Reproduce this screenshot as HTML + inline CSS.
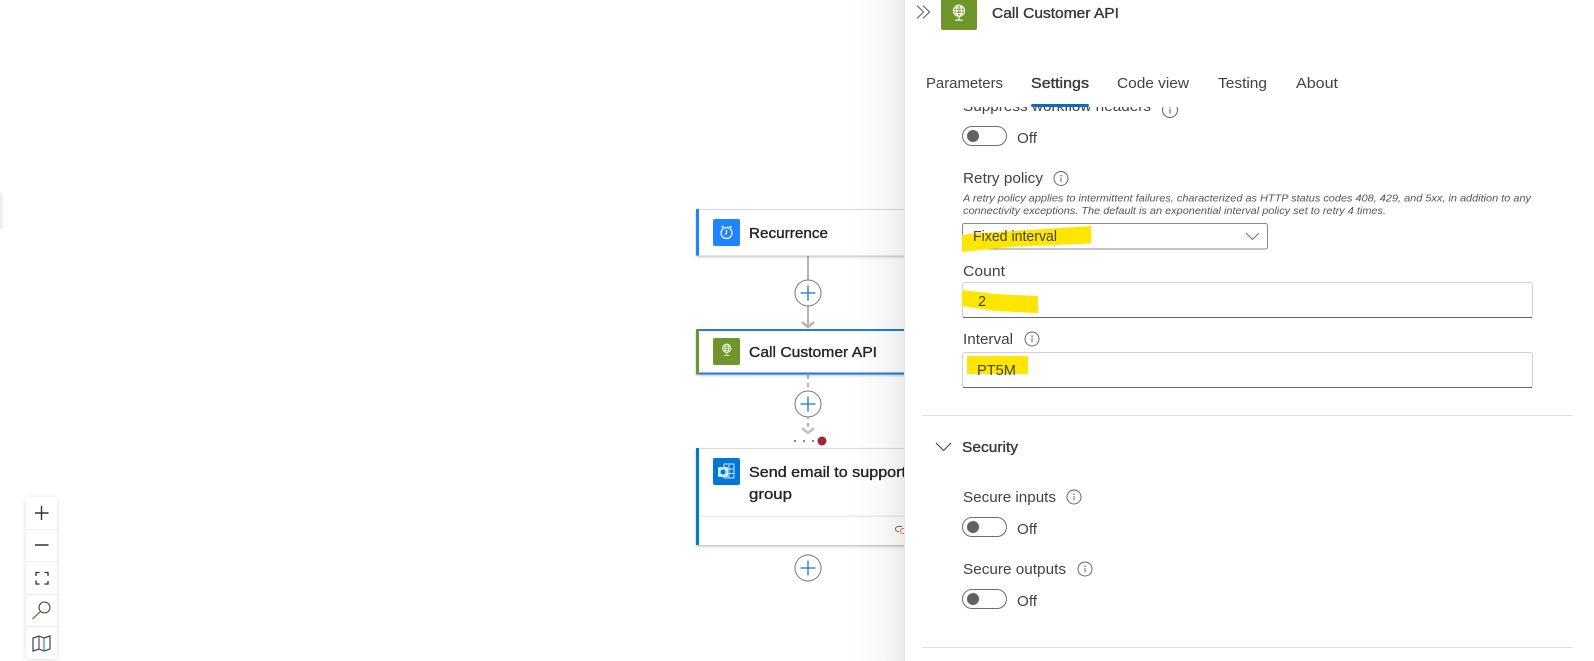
<!DOCTYPE html>
<html><head><meta charset="utf-8"><title>Call Customer API</title>
<style>
html,body{margin:0;padding:0;background:#fff;width:1594px;height:661px;overflow:hidden}
svg{display:block}
text{font-family:"Liberation Sans",sans-serif;fill:#424242}
.c{font-size:15px;fill:#242424;stroke:#242424;stroke-width:.35px}
.l{font-size:15px}
.sb{stroke:#383838;stroke-width:.35px;fill:#383838}
.h{font-size:10.5px;font-style:italic;fill:#555}
</style></head><body>
<svg width="1594" height="661" viewBox="0 0 1594 661" xmlns="http://www.w3.org/2000/svg">
<defs>
<linearGradient id="sh" x1="0" x2="1" y1="0" y2="0"><stop offset="0" stop-color="#000" stop-opacity="0"/><stop offset=".6" stop-color="#000" stop-opacity=".025"/><stop offset="1" stop-color="#000" stop-opacity=".08"/></linearGradient>
<filter id="s" x="-5%" y="-20%" width="110%" height="150%"><feDropShadow dx="0" dy="1.5" stdDeviation="1.2" flood-color="#000" flood-opacity=".25"/></filter>
<filter id="s2" x="-40%" y="-10%" width="180%" height="120%"><feDropShadow dx="0" dy="1" stdDeviation="3" flood-color="#000" flood-opacity=".13"/></filter>
<symbol id="info" viewBox="0 0 16 16" overflow="visible"><circle cx="8" cy="8" r="7.5" fill="none" stroke="#616161" stroke-width="1"/><circle cx="8" cy="4.900" r=".8" fill="#616161"/><path d="M8 7v4.600" stroke="#616161" stroke-width="1.100"/></symbol>
<symbol id="tog" viewBox="0 0 45 20"><rect x=".5" y=".5" width="44" height="19" rx="9.500" fill="#fff" stroke="#6e6e6e" stroke-width="1"/><circle cx="11" cy="10" r="6" fill="#616161"/></symbol>
<symbol id="plus" viewBox="0 0 28 28"><circle cx="14" cy="14" r="13" fill="#fff" stroke="#757575" stroke-width="1"/><path d="M14 6.500v15M6.500 14h15" stroke="#0f78d4" stroke-width="1.300"/></symbol>
<symbol id="globe" viewBox="0 0 16 18"><g fill="none" stroke="#fff" stroke-width="1"><circle cx="8" cy="7" r="5"/><ellipse cx="8" cy="7" rx="2.200" ry="5"/><path d="M3 7h10M3.800 4.500h8.400M3.800 9.500h8.400M8 12v3M4.500 15.500h7"/></g></symbol>
</defs>

<rect x="0" y="193" width="3" height="36" fill="#f0f0f0"/>

<!-- connectors -->
<path d="M808 256v71" stroke="#b5b5b5" stroke-width="2"/>
<path d="M802 322l6 5 6-5" fill="none" stroke="#b5b5b5" stroke-width="2.500"/>
<path d="M808 375v54" stroke="#b5b5b5" stroke-width="2" stroke-dasharray="4 4"/>
<path d="M802 428l6 5 6-5" fill="none" stroke="#c0c0c0" stroke-width="2.500"/>
<use href="#plus" x="794" y="279" width="28" height="28"/>
<use href="#plus" x="794" y="390" width="28" height="28"/>
<use href="#plus" x="794" y="554" width="28" height="28"/>
<circle cx="795" cy="441" r="1" fill="#616161"/><circle cx="804" cy="441" r="1" fill="#616161"/><circle cx="813" cy="441" r="1" fill="#616161"/>
<circle cx="822" cy="441" r="4.500" fill="#a4262c"/>

<!-- cards -->
<g filter="url(#s)"><rect x="696" y="209" width="220" height="46.500" rx="2" fill="#fff"/></g>
<rect x="696" y="209" width="3" height="46.500" fill="#1f85ff"/>
<rect x="699" y="209" width="210" height="1" fill="#dcdcdc"/>
<rect x="713" y="219" width="27" height="27" rx="2" fill="#1f85ff"/>
<g fill="none" stroke="#fff" stroke-width="1.200"><circle cx="726.500" cy="233" r="5.500"/><path d="M726.500 230v3.200l-1.500 1.600M721.500 227.500l2-1.500M731.500 227.500l-2-1.500"/></g>
<text class="c" x="749" y="238" textLength="79" lengthAdjust="spacingAndGlyphs">Recurrence</text>

<g filter="url(#s)"><rect x="696" y="329" width="220" height="45" rx="2" fill="#fff"/></g>
<path d="M696 330h220M696 373.500h220" stroke="#1d7fd6" stroke-width="2"/>
<rect x="696" y="329" width="3" height="45.500" fill="#6f962a"/>
<rect x="713" y="338" width="27" height="27" rx="2" fill="#6f962a"/>
<use href="#globe" x="720" y="342" width="13.500" height="16" opacity=".9"/>
<text class="c" x="749" y="357" textLength="128" lengthAdjust="spacingAndGlyphs">Call Customer API</text>

<g filter="url(#s)"><rect x="696" y="448" width="220" height="97" rx="2" fill="#fff"/></g>
<rect x="696" y="448" width="3" height="97" fill="#0078d4"/>
<rect x="699" y="448" width="210" height="1" fill="#dcdcdc"/>
<rect x="699" y="515.500" width="210" height="1.500" fill="#ececec"/>
<rect x="713" y="458" width="27" height="27" rx="2" fill="#0078d4"/>
<g fill="none" stroke="#cfe6f8" stroke-width="1"><path d="M724 464h10v14h-10zM724 469h10M724 473.500h10M729 464v14"/></g>
<rect x="718" y="467" width="10" height="10" rx="1" fill="#cfe6f8"/><circle cx="723" cy="472" r="2.500" fill="#0078d4"/>
<text class="c" x="749" y="477" textLength="157" lengthAdjust="spacingAndGlyphs">Send email to support</text>
<text class="c" x="749" y="499" textLength="43" lengthAdjust="spacingAndGlyphs">group</text>
<g fill="none" stroke-width="1"><path d="M902 526.500h-4a2.500 2.500 0 0 0 0 5h1" stroke="#6f6f6f"/><circle cx="903" cy="531" r="2.500" stroke="#d9822b"/></g>

<!-- panel shadow -->
<rect x="850" y="0" width="54" height="661" fill="url(#sh)"/>
<rect x="904" y="0" width="2" height="661" fill="#e6e6e6"/>
<rect x="905" y="0" width="689" height="661" fill="#fff"/>

<!-- header -->
<path d="M917 5.500l6.500 6.500-6.500 6.500M923 5.500l6.500 6.500-6.500 6.500" fill="none" stroke="#616161" stroke-width="1.100"/>
<path d="M941 0h36v28a2 2 0 0 1-2 2h-32a2 2 0 0 1-2-2z" fill="#6f962a"/>
<use href="#globe" x="950" y="3" width="18" height="20"/>
<text x="992" y="18" class="l sb" textLength="127" lengthAdjust="spacingAndGlyphs">Call Customer API</text>

<!-- clipped row -->
<text class="l" x="963" y="111" textLength="188" lengthAdjust="spacingAndGlyphs">Suppress workflow headers</text>
<use href="#info" x="1162" y="102" width="16" height="16"/>
<rect x="905" y="60" width="689" height="47" fill="#fff"/>

<!-- tabs -->
<text class="l" x="926" y="88" textLength="77" lengthAdjust="spacingAndGlyphs">Parameters</text>
<text class="l sb" x="1031" y="88" textLength="58" lengthAdjust="spacingAndGlyphs">Settings</text>
<rect x="1031" y="104" width="58" height="3" rx="1.500" fill="#0f6cbd"/>
<text class="l" x="1117" y="88" textLength="72" lengthAdjust="spacingAndGlyphs">Code view</text>
<text class="l" x="1218" y="88" textLength="49" lengthAdjust="spacingAndGlyphs">Testing</text>
<text class="l" x="1296" y="88" textLength="42" lengthAdjust="spacingAndGlyphs">About</text>

<use href="#tog" x="962" y="126" width="45" height="20"/>
<text class="l" x="1017" y="143" textLength="20" lengthAdjust="spacingAndGlyphs">Off</text>

<!-- retry -->
<text class="l" x="963" y="183" textLength="80" lengthAdjust="spacingAndGlyphs">Retry policy</text>
<use href="#info" x="1053.500" y="171" width="15" height="15"/>
<text class="h" x="963" y="201.500" textLength="568" lengthAdjust="spacingAndGlyphs">A retry policy applies to intermittent failures, characterized as HTTP status codes 408, 429, and 5xx, in addition to any</text>
<text class="h" x="963" y="214" textLength="423" lengthAdjust="spacingAndGlyphs">connectivity exceptions. The default is an exponential interval policy set to retry 4 times.</text>

<rect x="962.500" y="223.500" width="305" height="25.500" rx="2" fill="#fff" stroke="#8a8a8a"/>
<path d="M962 235L973 233.500L1091 226V243.500L1015 246.500L962 252Z" fill="#ffe600"/>
<text class="l" x="973" y="241" textLength="84" lengthAdjust="spacingAndGlyphs">Fixed interval</text>
<path d="M1246 233l6.500 6.500 6.500-6.500" fill="none" stroke="#757575" stroke-width="1"/>

<text class="l" x="963" y="276" textLength="42" lengthAdjust="spacingAndGlyphs">Count</text>
<rect x="962.500" y="282.500" width="570" height="35" rx="3" fill="#fff" stroke="#d1d1d1"/>
<path d="M963 317.500h569" stroke="#666" stroke-width="1"/>
<path d="M962 290L995 294L1038 296V313L995 311L962 306Z" fill="#ffe600"/>
<text class="l" x="978" y="306" textLength="8" lengthAdjust="spacingAndGlyphs">2</text>

<text class="l" x="963" y="344" textLength="50" lengthAdjust="spacingAndGlyphs">Interval</text>
<use href="#info" x="1024.500" y="331.500" width="15" height="15"/>
<rect x="962.500" y="352.500" width="570" height="35" rx="3" fill="#fff" stroke="#d1d1d1"/>
<path d="M963 387.500h569" stroke="#666" stroke-width="1"/>
<rect x="967" y="356" width="61" height="18" fill="#ffe600"/>
<text class="l" x="977" y="375" textLength="39" lengthAdjust="spacingAndGlyphs">PT5M</text>

<rect x="922" y="415" width="651" height="1" fill="#e0e0e0"/>

<!-- security -->
<path d="M936 443l7.500 7.500 7.500-7.500" fill="none" stroke="#424242" stroke-width="1.100"/>
<text class="l sb" x="962" y="452" textLength="56" lengthAdjust="spacingAndGlyphs">Security</text>
<text class="l" x="963" y="502" textLength="93" lengthAdjust="spacingAndGlyphs">Secure inputs</text>
<use href="#info" x="1066.500" y="489.500" width="15" height="15"/>
<use href="#tog" x="962" y="517" width="45" height="20"/>
<text class="l" x="1017" y="534" textLength="20" lengthAdjust="spacingAndGlyphs">Off</text>
<text class="l" x="963" y="574" textLength="103" lengthAdjust="spacingAndGlyphs">Secure outputs</text>
<use href="#info" x="1077.500" y="561.500" width="15" height="15"/>
<use href="#tog" x="962" y="589" width="45" height="20"/>
<text class="l" x="1017" y="606" textLength="20" lengthAdjust="spacingAndGlyphs">Off</text>
<rect x="922" y="647" width="651" height="1" fill="#e0e0e0"/>

<!-- zoom controls -->
<g filter="url(#s2)"><rect x="26" y="497" width="31" height="162" rx="4" fill="#fff"/></g>
<path d="M26 529.500h31M26 561.500h31M26 594.500h31M26 626.500h31" stroke="#eeeeee"/>
<path d="M41.500 506v14M35 513h13.500M35 545h13.500" stroke="#323130" stroke-width="1.400"/>
<path d="M36 576v-3.500h3.500M44.500 572.500h3.500v3.500M48 581v3h-3.500M39.500 584h-3.500v-3.500" fill="none" stroke="#323130" stroke-width="1.300"/>
<circle cx="44.500" cy="607.500" r="5.500" fill="none" stroke="#424242" stroke-width="1.100"/>
<path d="M40.500 611.500l-8 7.500" stroke="#8a6a3a" stroke-width="1.200"/>
<path d="M33 638l6-2 5 2 6-2v13l-6 2-5-2-6 2z" fill="none" stroke="#424242" stroke-width="1.200"/>
<path d="M39 636v13" stroke="#8a2a7a" stroke-width="1.200"/>
<path d="M44 638v13" stroke="#2a8ac0" stroke-width="1.200"/>
</svg>
</body></html>
